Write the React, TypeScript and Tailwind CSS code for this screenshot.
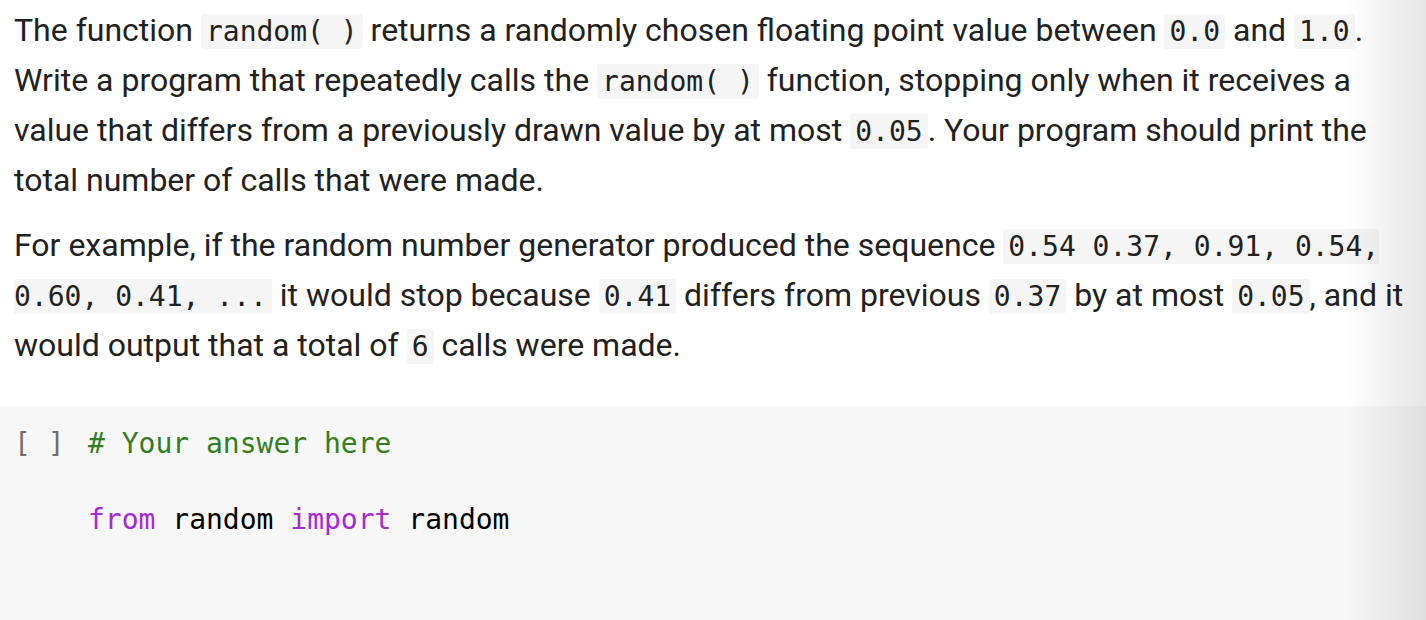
import React from "react";

const C = ({ children }: { children: React.ReactNode }) => (
  <code className="rounded-[3px] bg-[#f5f5f5] px-[5px] py-[1px] font-['DejaVu_Sans_Mono',monospace] text-[28px] leading-none text-[#212121]">
    {children}
  </code>
);

export default function App() {
  return (
    <div className="relative h-[620px] w-[1426px] overflow-hidden bg-white">
      <div className="w-[1416px] pl-[14px] pt-[5px] font-['Roboto',sans-serif] text-[32px] leading-[50px] text-[#212121]">
        <p>
          The function <C>random( )</C> returns a randomly chosen floating point value between <C>0.0</C> and{" "}
          <C>1.0</C>. Write a program that repeatedly calls the <C>random( )</C> function, stopping only when it
          receives a value that differs from a previously drawn value by at most <C>0.05</C>. Your program should
          print the total number of calls that were made.
        </p>
        <p className="mt-[15px]">
          For example, if the random number generator produced the sequence <C>0.54 0.37, 0.91, 0.54, 0.60, 0.41, ...</C>{" "}
          it would stop because <C>0.41</C> differs from previous <C>0.37</C> by at most <C>0.05</C>, and it would output
          that a total of <C>6</C> calls were made.
        </p>
      </div>
      <div className="mt-[36px] flex h-[300px] bg-[#f7f7f7] font-['DejaVu_Sans_Mono',monospace] text-[28px]">
        <div className="w-[88px] pl-[14px] pt-[19px] leading-[38px] text-[#6e6e6e]">[ ]</div>
        <div className="pt-[19px] leading-[38px]">
          <div className="text-[#347d1f]"># Your answer here</div>
          <div className="mt-[38px] text-black">
            <span className="text-[#a62ad6]">from</span> random <span className="text-[#a62ad6]">import</span> random
          </div>
        </div>
      </div>
      <div className="pointer-events-none absolute right-0 top-0 h-full w-[80px] bg-gradient-to-r from-transparent to-black/10" />
    </div>
  );
}
